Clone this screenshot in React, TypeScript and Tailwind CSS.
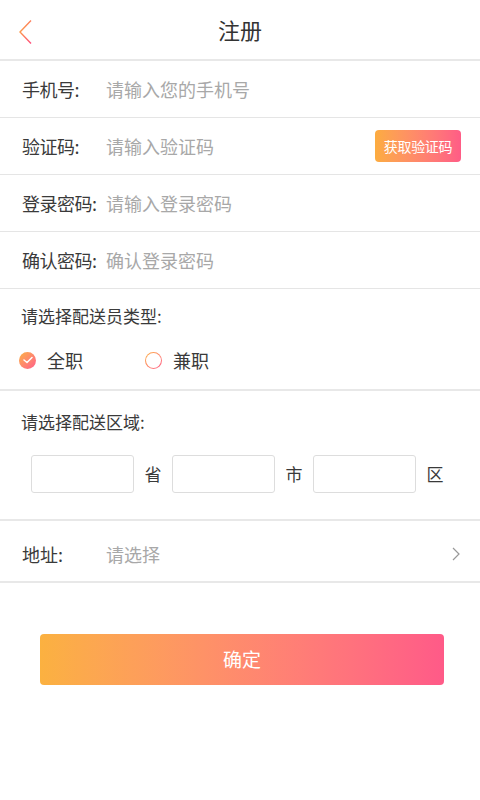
import { useState } from 'react';

const FONT = '"Noto Sans CJK SC", "Noto Sans", sans-serif';

function FieldRow({ label, placeholder, right }: { label: string; placeholder: string; right?: React.ReactNode }) {
  return (
    <div className="flex items-center h-[57px] border-b border-[#e5e5e5] pl-[22px] pr-[19px]">
      <span className="w-[84px] shrink-0 text-[18px] text-[#3a3a3a] whitespace-nowrap tracking-[-0.5px]">{label}</span>
      <input
        placeholder={placeholder}
        className="flex-1 min-w-0 bg-transparent text-[18px] text-[#333] placeholder-[#a8a8a8] outline-none"
        style={{ fontFamily: FONT }}
      />
      {right}
    </div>
  );
}

function Radio({ checked, label, onClick }: { checked: boolean; label: string; onClick: () => void }) {
  return (
    <button className="flex items-center gap-[11px]" onClick={onClick}>
      {checked ? (
        <span className="w-[17px] h-[17px] rounded-full bg-gradient-to-br from-[#fbb03b] to-[#ff5a88] flex items-center justify-center">
          <svg width="10" height="8" viewBox="0 0 10 8" fill="none">
            <path d="M1 4 L4 6.5 L9 1.5" stroke="white" strokeWidth="1.5" strokeLinecap="round" strokeLinejoin="round" />
          </svg>
        </span>
      ) : (
        <span className="w-[17px] h-[17px] rounded-full bg-gradient-to-br from-[#fbb03b] to-[#ff5a88] p-px">
          <span className="block w-full h-full rounded-full bg-white" />
        </span>
      )}
      <span className="text-[18px] text-[#3a3a3a]">{label}</span>
    </button>
  );
}

export default function App() {
  const [type, setType] = useState<'full' | 'part'>('full');

  return (
    <div className="w-[480px] h-[800px] bg-white" style={{ fontFamily: FONT }}>
      {/* Header */}
      <div className="relative flex items-center justify-center h-[61px] border-b-2 border-[#e8e8e8]">
        <svg className="absolute left-[18px] top-[19px]" width="16" height="26" viewBox="0 0 16 26" fill="none">
          <defs>
            <linearGradient id="back" x1="0" y1="0" x2="1" y2="1">
              <stop offset="0" stopColor="#fbb03b" />
              <stop offset="1" stopColor="#ff4f7e" />
            </linearGradient>
          </defs>
          <path d="M13 1.5 L2 13 L13 24.5" stroke="url(#back)" strokeWidth="1.4" />
        </svg>
        <h1 className="text-[22px] text-[#333]">注册</h1>
      </div>

      <FieldRow label="手机号:" placeholder="请输入您的手机号" />
      <FieldRow
        label="验证码:"
        placeholder="请输入验证码"
        right={
          <button className="shrink-0 w-[86px] h-[32px] rounded-[4px] bg-gradient-to-r from-[#fcac3f] to-[#ff5c86] text-white text-[14px] tracking-[-0.3px]">
            获取验证码
          </button>
        }
      />
      <FieldRow label="登录密码:" placeholder="请输入登录密码" />
      <FieldRow label="确认密码:" placeholder="确认登录密码" />

      {/* Type */}
      <div className="h-[102px] border-b-2 border-[#e8e8e8] px-[21px] pt-[14px]">
        <div className="text-[17px] text-[#3a3a3a]">请选择配送员类型:</div>
        <div className="flex items-center gap-[62px] mt-[18px] -ml-[2px]">
          <Radio checked={type === 'full'} label="全职" onClick={() => setType('full')} />
          <Radio checked={type === 'part'} label="兼职" onClick={() => setType('part')} />
        </div>
      </div>

      {/* Region */}
      <div className="h-[130px] border-b-2 border-[#e8e8e8] px-[21px] pt-[18px]">
        <div className="text-[17px] text-[#3a3a3a]">请选择配送区域:</div>
        <div className="flex items-center mt-[20px] pl-[10px]">
          <input className="w-[103px] h-[38px] rounded-[3px] border border-[#ddd] outline-none" />
          <span className="w-[38px] text-center text-[17px] text-[#3a3a3a]">省</span>
          <input className="w-[103px] h-[38px] rounded-[3px] border border-[#ddd] outline-none" />
          <span className="w-[38px] text-center text-[17px] text-[#3a3a3a]">市</span>
          <input className="w-[103px] h-[38px] rounded-[3px] border border-[#ddd] outline-none" />
          <span className="w-[38px] text-center text-[17px] text-[#3a3a3a]">区</span>
        </div>
      </div>

      {/* Address */}
      <div className="flex items-center h-[62px] border-b-2 border-[#e8e8e8] pl-[22px] pr-[20px] pt-[6px]">
        <span className="w-[84px] shrink-0 text-[18px] text-[#3a3a3a]">地址:</span>
        <span className="flex-1 text-[18px] text-[#a8a8a8]">请选择</span>
        <svg width="8" height="14" viewBox="0 0 8 14" fill="none">
          <path d="M1 1 L7 7 L1 13" stroke="#999" strokeWidth="1.2" />
        </svg>
      </div>

      {/* Submit */}
      <div className="pl-[40px] pr-[36px] pt-[51px]">
        <button className="w-full h-[51px] rounded-[4px] bg-gradient-to-r from-[#fbb140] to-[#ff5a88] text-white text-[19px]">
          确定
        </button>
      </div>
    </div>
  );
}
